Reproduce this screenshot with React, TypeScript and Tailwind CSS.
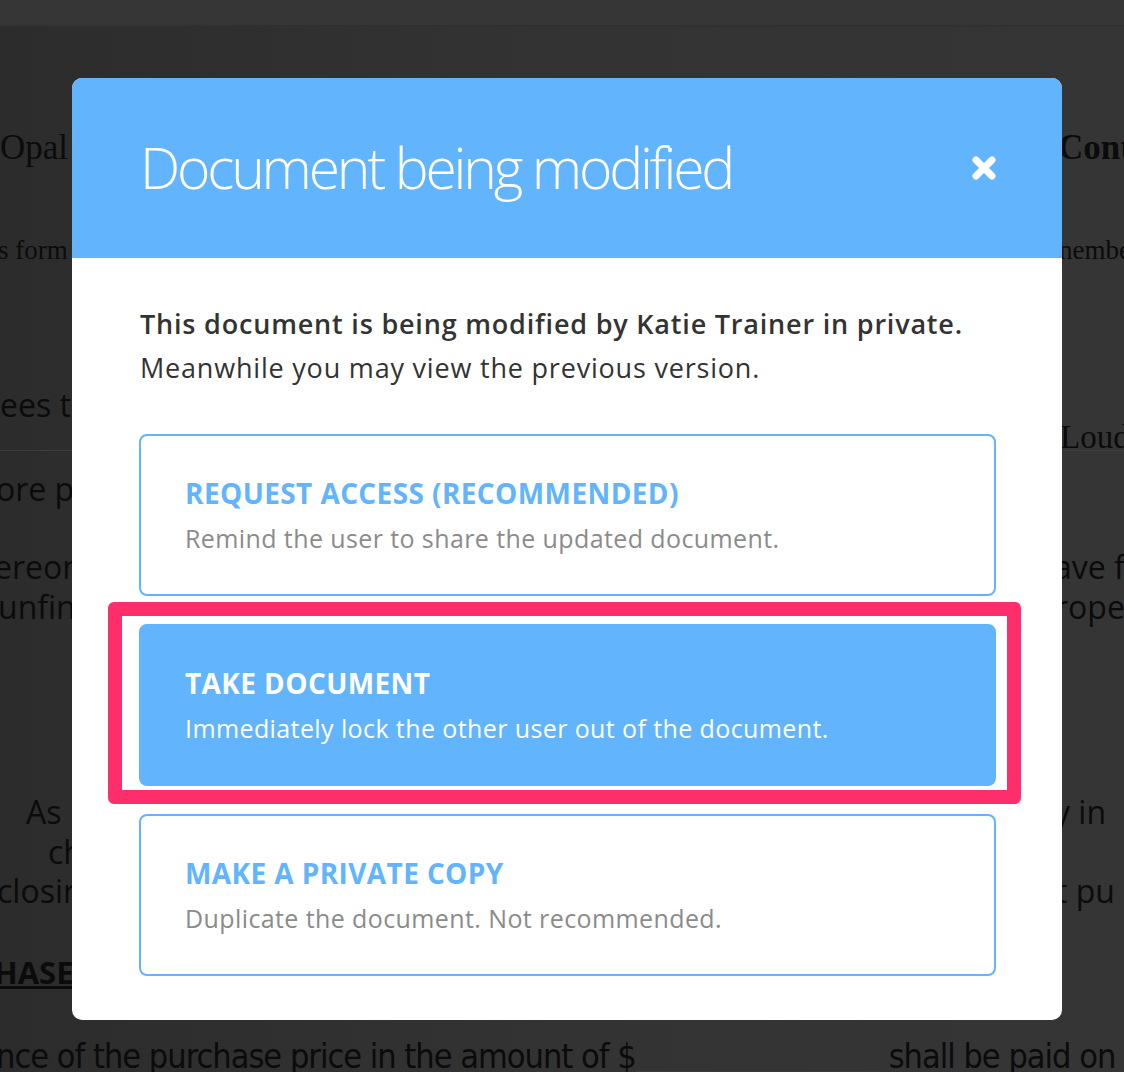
import React from "react";

type Choice = {
  title: string;
  text: string;
  primary?: boolean;
  marked?: boolean;
};

const choices: Choice[] = [
  {
    title: "Request access (recommended)",
    text: "Remind the user to share the updated document.",
  },
  {
    title: "Take document",
    text: "Immediately lock the other user out of the document.",
    primary: true,
    marked: true,
  },
  {
    title: "Make a private copy",
    text: "Duplicate the document. Not recommended.",
  },
];

const serif = { fontFamily: '"Liberation Serif", "DejaVu Serif", serif' };

// the contract page sitting behind the dialog, mostly hidden
const DocRow = ({
  left,
  right,
  className,
}: {
  left?: React.ReactNode;
  right?: React.ReactNode;
  className: string;
}) => (
  <div className={`flex whitespace-nowrap ${className}`}>
    <div className="w-[1060px] shrink-0 overflow-hidden">{left}</div>
    <div className="shrink-0">{right}</div>
  </div>
);

const CloseIcon = () => (
  <svg width="28" height="28" viewBox="0 0 28 28" aria-hidden="true">
    <path
      d="M6 6 L22 22 M22 6 L6 22"
      stroke="white"
      strokeWidth="7"
      strokeLinecap="round"
      fill="none"
    />
  </svg>
);

const ChoiceCard = ({ choice }: { choice: Choice }) => (
  <div className="relative">
    {choice.marked && (
      <div className="pointer-events-none absolute -bottom-[18px] -left-[31px] -right-[25px] -top-[22px] rounded-[6px] border-[14px] border-[#fe2e6c]" />
    )}
    <button
      className={`flex h-[162px] w-full flex-col justify-center rounded-[8px] border-2 border-[#62b4fc] px-[44px] text-left ${
        choice.primary ? "bg-[#62b4fc] text-white" : "bg-white"
      }`}
    >
      <span
        className={`text-[28px] font-bold uppercase leading-[34px] tracking-[0.4px] ${
          choice.primary ? "text-white" : "text-[#62b4fc]"
        }`}
      >
        {choice.title}
      </span>
      <span
        className={`mt-[11px] text-[25px] leading-[34px] tracking-[0.4px] ${
          choice.primary ? "text-white" : "text-[#8b8b8b]"
        }`}
      >
        {choice.text}
      </span>
    </button>
  </div>
);

export default function App() {
  return (
    <div
      className="relative h-[1072px] w-full overflow-hidden bg-gradient-to-r from-[#2c2c2c] via-[#333333] to-[#353535] text-[#0b0b0b]"
      style={{ fontFamily: '"Open Sans", "Noto Sans", sans-serif' }}
    >
      <div className="h-[27px] border-b-2 border-[#2b3135] bg-[#363636]" />

      <div className="flex flex-col">
        <DocRow
          className="mt-[98px] h-[46px] items-center"
          left={<span className="text-[35px]" style={serif}>Opal</span>}
          right={
            <span className="-ml-[2px] text-[35px] font-bold" style={serif}>
              Contract
            </span>
          }
        />
        <DocRow
          className="mt-[59px] h-[40px] items-center"
          left={<span className="-ml-[2px] text-[27px]" style={serif}>s form</span>}
          right={<span className="-ml-[1px] text-[27px]" style={serif}>nembers</span>}
        />
        <DocRow
          className="mt-[112px] h-[46px] items-start"
          left={<span className="text-[32px] leading-[46px]">ees to the</span>}
          right={
            <span className="mt-[32px] block text-[33px] leading-[46px]" style={serif}>
              Loudoun
            </span>
          }
        />
        <div className="mt-[22px] h-px bg-[#3d3d3d]" />
        <DocRow
          className="mt-[15px] h-[46px] items-center"
          left={<span className="-ml-[4px] text-[32px]">ore p</span>}
        />
        <DocRow
          className="mt-[35px] h-[40px] items-center"
          left={<span className="-ml-[6px] text-[32px]">ereon, the</span>}
          right={<span className="-ml-[6px] text-[32px]">ave f</span>}
        />
        <DocRow
          className="h-[40px] items-center"
          left={<span className="-ml-[2px] text-[32px]">unfin</span>}
          right={<span className="-ml-[5px] text-[32px]">rope</span>}
        />
        <DocRow
          className="mt-[165px] h-[40px] items-center"
          left={<span className="ml-[26px] text-[32px]">As</span>}
          right={<span className="-ml-[6px] text-[32px]">y in</span>}
        />
        <DocRow
          className="h-[40px] items-center"
          left={<span className="ml-[48px] text-[32px]">ch</span>}
        />
        <DocRow
          className="h-[38px] items-center"
          left={<span className="-ml-[3px] text-[32px]">closir</span>}
          right={<span className="-ml-[4px] text-[32px]">t pu</span>}
        />
        <DocRow
          className="mt-[42px] h-[40px] items-center"
          left={
            <span className="-ml-[6px] text-[31px] font-bold underline">HASE</span>
          }
        />
        <div
          className="mt-[44px] flex h-[40px] items-center whitespace-nowrap text-[34px] tracking-[-1px]"
          style={{ fontFamily: '"Liberation Sans Narrow", "DejaVu Sans Condensed", sans-serif' }}
        >
          <span className="-ml-[4px]">nce of the purchase price in the amount of $</span>
          <span className="mt-[30px] h-px w-[245px] bg-[#3a3a3a]" />
          <span className="ml-[8px]">shall be paid on</span>
        </div>
      </div>

      <div className="absolute left-[72px] top-[78px] w-[990px] overflow-hidden rounded-[10px] bg-white">
        <div className="flex h-[180px] items-center justify-between bg-[#62b4fd] pl-[68px] pr-[64px]">
          <h1 className="text-[57px] font-light tracking-[-3.2px] text-white">
            Document being modified
          </h1>
          <button aria-label="Close">
            <CloseIcon />
          </button>
        </div>

        <div className="pb-[44px] pl-[67px] pr-[66px] pt-[44px]">
          <div className="pl-px text-[27px] leading-[44px] tracking-[0.8px] text-[#333333]">
            <p className="font-semibold">
              This document is being modified by Katie Trainer in private.
            </p>
            <p>Meanwhile you may view the previous version.</p>
          </div>

          <div className="mt-[44px] flex flex-col gap-[28px]">
            {choices.map((c) => (
              <ChoiceCard key={c.title} choice={c} />
            ))}
          </div>
        </div>
      </div>
    </div>
  );
}
